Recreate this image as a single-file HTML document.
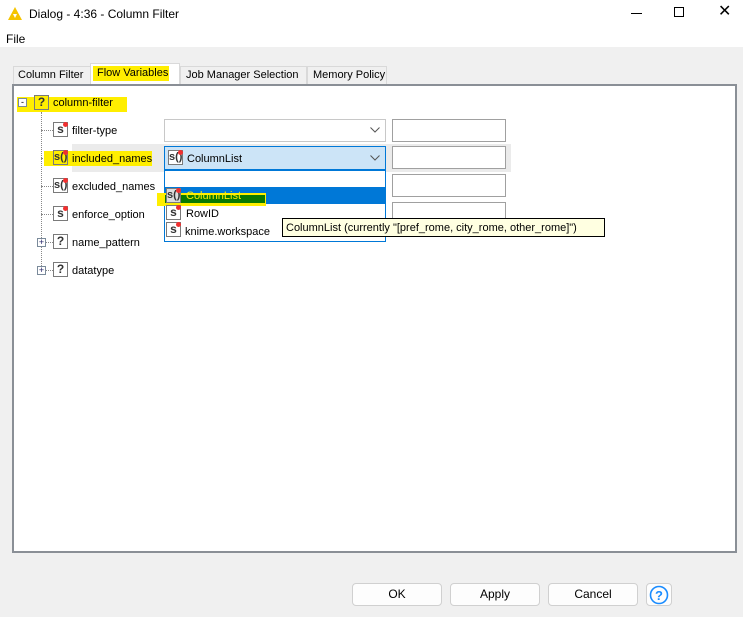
<!DOCTYPE html>
<html><head><style>
*{margin:0;padding:0;box-sizing:border-box}
body{width:743px;height:617px;background:#f0f0f0;font-family:"Liberation Sans","Noto Sans CJK JP",sans-serif;font-size:11px;color:#000;position:relative;overflow:hidden}
.a{position:absolute}
.t{position:absolute;white-space:nowrap;font-size:11px;line-height:14px}
.ic{position:absolute;width:15px;height:15px;border:1px solid #7a7a7a;background:#fff;font-weight:bold;font-size:12px;line-height:13px;text-align:center;color:#333}
.dot{position:absolute;right:-1px;top:-1px;width:5px;height:5px;border-radius:50%;background:#f03030}
.box{position:absolute;border:1px solid #a0a0a0;background:#fff}
.btn{position:absolute;top:583px;height:23px;width:90px;border:1px solid #d0d0d0;border-radius:4px;background:#fdfdfd;text-align:center;line-height:21px;font-size:12px}
.hl{position:absolute;background:#ffee00}
</style></head><body>
<div class="a" style="left:0;top:0;width:743px;height:47px;background:#fff"></div>
<svg class="a" style="left:7px;top:6px" width="16" height="15"><polygon points="8,1 15,14 1,14" fill="#f5c400"/><polygon points="6,8 10,8 8,12" fill="#fff"/></svg>
<div class="t" style="left:29px;top:7px;font-size:12px">Dialog - 4:36 - Column Filter</div>
<div class="a" style="left:631px;top:13px;width:11px;height:1px;background:#000"></div>
<div class="a" style="left:674px;top:7px;width:10px;height:10px;border:1px solid #000"></div>
<div class="t" style="left:718px;top:4px;font-size:16px;line-height:16px">✕</div>
<div class="t" style="left:6px;top:32px;font-size:12px">File</div>

<!-- tabs -->
<div class="a" style="left:13px;top:66px;width:78px;height:18px;border:1px solid #d9d9d9;border-bottom:none;background:#f0f0f0"></div>
<div class="t" style="left:18px;top:68px">Column Filter</div>
<div class="a" style="left:90px;top:63px;width:90px;height:22px;border:1px solid #d9d9d9;border-bottom:none;background:#fff"></div>
<div class="hl" style="left:93px;top:66px;width:76px;height:15px"></div>
<div class="t" style="left:97px;top:66px">Flow Variables</div>
<div class="a" style="left:180px;top:66px;width:127px;height:18px;border:1px solid #d9d9d9;border-bottom:none"></div>
<div class="t" style="left:186px;top:68px">Job Manager Selection</div>
<div class="a" style="left:307px;top:66px;width:80px;height:18px;border:1px solid #d9d9d9;border-bottom:none"></div>
<div class="t" style="left:313px;top:68px">Memory Policy</div>

<!-- panel -->
<div class="a" style="left:12px;top:84px;width:725px;height:469px;border:2px solid #8a8f96;background:#fff"></div>

<!-- tree lines -->
<div class="a" style="left:41px;top:112px;width:0;height:160px;border-left:1px dotted #888"></div>
<div class="a" style="left:41px;top:130px;width:12px;border-top:1px dotted #888"></div>
<div class="a" style="left:41px;top:158px;width:12px;border-top:1px dotted #888"></div>
<div class="a" style="left:41px;top:186px;width:12px;border-top:1px dotted #888"></div>
<div class="a" style="left:41px;top:214px;width:12px;border-top:1px dotted #888"></div>
<div class="a" style="left:41px;top:242px;width:12px;border-top:1px dotted #888"></div>
<div class="a" style="left:41px;top:270px;width:12px;border-top:1px dotted #888"></div>

<div class="hl" style="left:17px;top:97px;width:110px;height:15px"></div>
<div class="a" style="left:18px;top:98px;width:9px;height:9px;border:1px solid #7a8a9a;background:#fff;font-size:9px;line-height:6px;text-align:center">-</div>
<div class="ic" style="left:34px;top:95px;background:#ffee00">?</div>
<div class="t" style="left:53px;top:96px">column-filter</div>

<div class="a" style="left:72px;top:144px;width:439px;height:28px;background:#ebebeb"></div>

<div class="ic" style="left:53px;top:122px">s<div class="dot"></div></div>
<div class="t" style="left:72px;top:124px">filter-type</div>
<div class="hl" style="left:44px;top:151px;width:108px;height:15px"></div>
<div class="ic" style="left:53px;top:150px;font-size:11px;background:#ffee00">s()<div class="dot"></div></div>
<div class="t" style="left:72px;top:152px">included_names</div>
<div class="ic" style="left:53px;top:178px;font-size:11px">s()<div class="dot"></div></div>
<div class="t" style="left:72px;top:180px">excluded_names</div>
<div class="ic" style="left:53px;top:206px">s<div class="dot"></div></div>
<div class="t" style="left:72px;top:208px">enforce_option</div>
<div class="a" style="left:37px;top:238px;width:9px;height:9px;border:1px solid #7a8a9a;background:#fff;font-size:9px;line-height:7px;text-align:center;color:#226">+</div>
<div class="ic" style="left:53px;top:234px">?</div>
<div class="t" style="left:72px;top:236px">name_pattern</div>
<div class="a" style="left:37px;top:266px;width:9px;height:9px;border:1px solid #7a8a9a;background:#fff;font-size:9px;line-height:7px;text-align:center;color:#226">+</div>
<div class="ic" style="left:53px;top:262px">?</div>
<div class="t" style="left:72px;top:264px">datatype</div>

<!-- combos -->
<div class="box" style="left:164px;top:119px;width:222px;height:23px;border-color:#c8c8c8"></div>
<svg class="a" style="left:370px;top:127px" width="10" height="6"><polyline points="0.5,0.5 5,5 9.5,0.5" fill="none" stroke="#555"/></svg>
<div class="box" style="left:164px;top:146px;width:222px;height:24px;border-color:#0078d7;background:#cce4f7"></div>
<div class="ic" style="left:168px;top:150px;font-size:11px">s()<div class="dot"></div></div>
<div class="t" style="left:187px;top:152px">ColumnList</div>
<svg class="a" style="left:370px;top:155px" width="10" height="6"><polyline points="0.5,0.5 5,5 9.5,0.5" fill="none" stroke="#555"/></svg>

<div class="box" style="left:392px;top:119px;width:114px;height:23px"></div>
<div class="box" style="left:392px;top:146px;width:114px;height:23px"></div>
<div class="box" style="left:392px;top:174px;width:114px;height:23px"></div>
<div class="box" style="left:392px;top:202px;width:114px;height:23px"></div>

<!-- dropdown -->
<div class="box" style="left:164px;top:170px;width:222px;height:72px;border-color:#0078d7"></div>
<div class="a" style="left:165px;top:187px;width:220px;height:17px;background:#0078d7"></div>
<div class="hl" style="left:157px;top:193px;width:109px;height:13px"></div>
<div class="a" style="left:165px;top:195px;width:100px;height:8px;background:#0a7a00"></div>
<div class="ic" style="left:166px;top:188px;font-size:11px;background:#ddd">s()<div class="dot"></div></div>
<div class="t" style="left:186px;top:189px;color:#ffee00">ColumnList</div>
<div class="ic" style="left:166px;top:205px">s<div class="dot"></div></div>
<div class="t" style="left:186px;top:207px">RowID</div>
<div class="ic" style="left:166px;top:222px">s<div class="dot"></div></div>
<div class="t" style="left:185px;top:225px">knime.workspace</div>

<div class="a" style="left:282px;top:218px;width:323px;height:19px;border:1px solid #000;background:#ffffe1"></div>
<div class="t" style="left:286px;top:221px">ColumnList (currently "[pref_rome, city_rome, other_rome]")</div>

<!-- buttons -->
<div class="btn" style="left:352px">OK</div>
<div class="btn" style="left:450px">Apply</div>
<div class="btn" style="left:548px">Cancel</div>
<div class="btn" style="left:646px;width:26px"><svg width="20" height="20" style="margin-top:1px"><circle cx="10" cy="10" r="8.5" fill="none" stroke="#1a8cff" stroke-width="1.6"/><text x="10" y="15" text-anchor="middle" font-size="13" font-family="Liberation Sans" fill="#1a8cff" font-weight="bold">?</text></svg></div>
</body></html>
